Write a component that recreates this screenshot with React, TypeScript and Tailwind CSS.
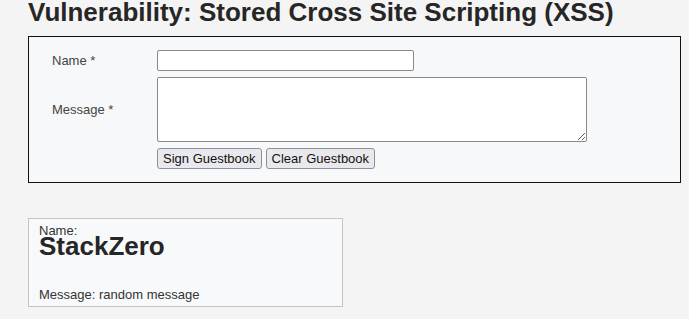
const font = { fontFamily: '"Liberation Sans", Arial, sans-serif' }

export default function App() {
  return (
    <div className="min-h-[319px] bg-[#f4f4f4] pl-[28px] pr-[8px] text-[13px] text-[#333]" style={font}>
      <h1 className="text-[26px] font-bold leading-[24px] text-[#262626]">
        Vulnerability: Stored Cross Site Scripting (XSS)
      </h1>

      {/* Guestbook form */}
      <div className="mt-[12px] w-[653px] border border-[#111] bg-[#f7f8f9] pt-[13px] pb-[13px] pl-[23px]">
        <form className="flex flex-col gap-[6px]" onSubmit={(e) => e.preventDefault()}>
          <div className="flex items-center">
            <label className="w-[105px] text-[#444]">Name *</label>
            <input
              type="text"
              className="h-[21px] w-[257px] rounded-[2px] border border-[#8a8a8a] bg-white px-1 text-[13px] outline-none"
            />
          </div>
          <div className="flex items-center">
            <label className="w-[105px] text-[#444]">Message *</label>
            <textarea className="block h-[65px] w-[430px] rounded-[2px] border border-[#8a8a8a] bg-white px-1 text-[13px] outline-none" />
          </div>
          <div className="flex items-center gap-[4px] pl-[105px]">
            <button className="h-[21px] rounded-[3px] border border-[#8f8f9d] bg-[#e9e9ed] px-[5px] text-[13px] leading-[19px] text-[#111]">
              Sign Guestbook
            </button>
            <button className="h-[21px] rounded-[3px] border border-[#8f8f9d] bg-[#e9e9ed] px-[5px] text-[13px] leading-[19px] text-[#111]">
              Clear Guestbook
            </button>
          </div>
        </form>
      </div>

      {/* Stored entry */}
      <div className="mt-[35px] w-[315px] border border-[#c4c4c4] bg-[#f8f9fa] pt-[5px] pb-[4px] pl-[10px] text-[#333]">
        <div className="leading-[13px]">Name:</div>
        <div className="text-[26px] font-bold leading-[18px] text-[#262626]">StackZero</div>
        <div className="mt-[32px] leading-[15px]">Message: random message</div>
      </div>
    </div>
  )
}
